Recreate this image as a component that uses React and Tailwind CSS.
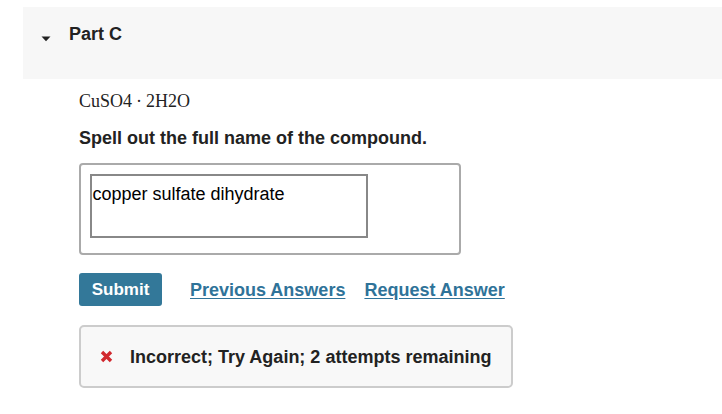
import React from "react";

export default function App() {
  return (
    <div className="w-[722px] h-[414px] bg-white overflow-hidden text-[#222] font-['Liberation_Sans',Arial,sans-serif]">
      <div className="ml-[23px] mt-[7px] h-[72px] bg-[#f7f7f7] flex items-start pt-[17px]">
        <svg className="ml-[18px] mt-[12px]" width="10" height="6" viewBox="0 0 10 6">
          <path d="M0.5 0.5 L9.5 0.5 L5 5.2 Z" fill="#222" />
        </svg>
        <div className="ml-[18px] text-[18px] leading-5 font-bold">Part C</div>
      </div>
      <div className="pl-[79px]">
        <div className="mt-[12px] text-[18px] leading-5 font-['Liberation_Serif',serif]">
          CuSO4<span className="mx-[4px]">·</span>2H2O
        </div>
        <div className="mt-[17px] text-[18px] leading-5 font-bold">
          Spell out the full name of the compound.
        </div>
        <div className="mt-[15px] w-[382px] h-[92px] border-2 border-[#aaa] rounded-[4px] pt-[9px] pl-[8.5px]">
          <div className="w-[278px] h-[64px] border-2 border-[#888] pt-[8px] pl-px text-[18px] leading-5 text-black">
            copper sulfate dihydrate
          </div>
        </div>
        <div className="mt-[18px] flex items-center">
          <div className="w-[83px] h-[33px] rounded-[3px] bg-[#337899] text-white font-bold text-[17px] leading-5 flex items-center justify-center pt-px">
            Submit
          </div>
          <a className="ml-[28px] text-[18px] leading-5 font-bold text-[#2f7399] underline underline-offset-2">
            Previous Answers
          </a>
          <a className="ml-[19px] text-[18px] leading-5 font-bold text-[#2f7399] underline underline-offset-2">
            Request Answer
          </a>
        </div>
        <div className="mt-[19px] w-[434px] h-[63px] border-2 border-[#ccc] rounded-[5px] bg-[#f8f8f8] flex items-center pl-[19px]">
          <svg width="13" height="13" viewBox="0 0 13 13">
            <path d="M2 2 L11 11 M11 2 L2 11" stroke="#d1282e" strokeWidth="3.4" strokeLinecap="butt" />
          </svg>
          <div className="ml-[17px] text-[18px] leading-5 font-bold">
            Incorrect; Try Again; 2 attempts remaining
          </div>
        </div>
      </div>
    </div>
  );
}
